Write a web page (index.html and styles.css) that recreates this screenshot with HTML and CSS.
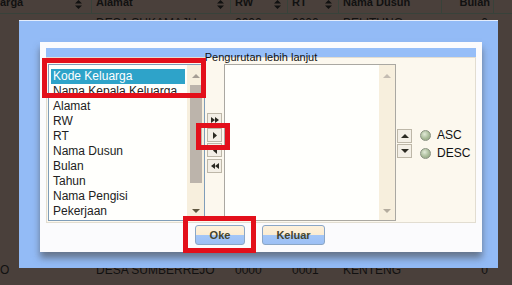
FILE: index.html
```html
<!DOCTYPE html>
<html lang="id">
<head>
    <meta charset="UTF-8">
    <meta name="viewport" content="width=device-width, initial-scale=1.0">
    <title>Pengurutan lebih lanjut</title>
    <link rel="stylesheet" href="styles.css">
</head>
<body>

    <div class="grid">
        <div class="thead">
            <div class="th c0"><span>arga</span><svg class="sort" width="7" height="9" viewBox="0 0 7 9"><path d="M3.5 0L7 3.5H0Z M0 5.5H7L3.5 9Z"/></svg></div>
            <div class="th c1"><span>Alamat</span><svg class="sort" width="7" height="9" viewBox="0 0 7 9"><path d="M3.5 0L7 3.5H0Z M0 5.5H7L3.5 9Z"/></svg></div>
            <div class="th c2"><span>RW</span><svg class="sort" width="7" height="9" viewBox="0 0 7 9"><path d="M3.5 0L7 3.5H0Z M0 5.5H7L3.5 9Z"/></svg></div>
            <div class="th c3"><span>RT</span><svg class="sort" width="7" height="9" viewBox="0 0 7 9"><path d="M3.5 0L7 3.5H0Z M0 5.5H7L3.5 9Z"/></svg></div>
            <div class="th c4"><span>Nama Dusun</span></div>
            <div class="th c5 right"><span>Bulan</span></div>
            <div class="th c6"></div>
        </div>

        <div class="tr"><div class="td c0"></div><div class="td c1">DESA SUKAMAJU</div><div class="td c2">0000</div><div class="td c3">0000</div><div class="td c4">BELITUNG</div><div class="td c5 right">0</div><div class="td c6"></div></div>
        <div class="tr"><div class="td c0"></div><div class="td c1">DESA SUKAMAJU</div><div class="td c2">0000</div><div class="td c3">0001</div><div class="td c4">BELITUNG</div><div class="td c5 right">0</div><div class="td c6"></div></div>
        <div class="tr"><div class="td c0"></div><div class="td c1">DESA SUKAMAJU</div><div class="td c2">0000</div><div class="td c3">0001</div><div class="td c4">BELITUNG</div><div class="td c5 right">0</div><div class="td c6"></div></div>
        <div class="tr"><div class="td c0"></div><div class="td c1">DESA SUKAMAJU</div><div class="td c2">0001</div><div class="td c3">0002</div><div class="td c4">KRAJAN</div><div class="td c5 right">0</div><div class="td c6"></div></div>
        <div class="tr"><div class="td c0"></div><div class="td c1">DESA SUKAMAJU</div><div class="td c2">0001</div><div class="td c3">0002</div><div class="td c4">KRAJAN</div><div class="td c5 right">0</div><div class="td c6"></div></div>
        <div class="tr"><div class="td c0"></div><div class="td c1">DESA SUKAMAJU</div><div class="td c2">0001</div><div class="td c3">0003</div><div class="td c4">KRAJAN</div><div class="td c5 right">0</div><div class="td c6"></div></div>
        <div class="tr"><div class="td c0"></div><div class="td c1">DESA SUKAMAJU</div><div class="td c2">0002</div><div class="td c3">0003</div><div class="td c4">SUMBERSARI</div><div class="td c5 right">0</div><div class="td c6"></div></div>
        <div class="tr"><div class="td c0"></div><div class="td c1">DESA SUKAMAJU</div><div class="td c2">0002</div><div class="td c3">0004</div><div class="td c4">SUMBERSARI</div><div class="td c5 right">0</div><div class="td c6"></div></div>
        <div class="tr"><div class="td c0"></div><div class="td c1">DESA SUKAMAJU</div><div class="td c2">0002</div><div class="td c3">0004</div><div class="td c4">SUMBERSARI</div><div class="td c5 right">0</div><div class="td c6"></div></div>
        <div class="tr"><div class="td c0"></div><div class="td c1">DESA SUMBERREJO</div><div class="td c2">0000</div><div class="td c3">0001</div><div class="td c4">KENTENG</div><div class="td c5 right">0</div><div class="td c6"></div></div>
        <div class="tr"><div class="td c0"></div><div class="td c1">DESA SUMBERREJO</div><div class="td c2">0000</div><div class="td c3">0001</div><div class="td c4">KENTENG</div><div class="td c5 right">0</div><div class="td c6"></div></div>
        <div class="tr"><div class="td c0"></div><div class="td c1">DESA SUMBERREJO</div><div class="td c2">0000</div><div class="td c3">0001</div><div class="td c4">KENTENG</div><div class="td c5 right">0</div><div class="td c6"></div></div>
        <div class="tr"><div class="td c0"></div><div class="td c1">DESA SUMBERREJO</div><div class="td c2">0000</div><div class="td c3">0001</div><div class="td c4">KENTENG</div><div class="td c5 right">0</div><div class="td c6"></div></div>
        <div class="tr"><div class="td c0">O</div><div class="td c1">DESA SUMBERREJO</div><div class="td c2">0000</div><div class="td c3">0001</div><div class="td c4">KENTENG</div><div class="td c5 right">0</div><div class="td c6"></div></div>
    </div>

    <!-- dialog sits over the table -->
    <div class="dialog">
        <div class="panel">
            <div class="caption">Pengurutan lebih lanjut</div>

            <div class="frame">
                <div class="listbox source">
                    <ul class="items">
                        <li class="selected">Kode Keluarga</li>
                        <li>Nama Kepala Keluarga</li>
                        <li>Alamat</li>
                        <li>RW</li>
                        <li>RT</li>
                        <li>Nama Dusun</li>
                        <li>Bulan</li>
                        <li>Tahun</li>
                        <li>Nama Pengisi</li>
                        <li>Pekerjaan</li>
                    </ul>
                    <div class="vscroll">
                        <span class="tri up"></span>
                        <span class="thumb"></span>
                        <span class="tri down"></span>
                    </div>
                </div>

                <div class="moves">
                    <button class="mini" aria-label="Pindah semua">
                        <svg width="8" height="6" viewBox="0 0 8 6"><path d="M0 0L4 3L0 6Z M4 0L8 3L4 6Z"/></svg>
                    </button>
                    <button class="mini" aria-label="Pindah">
                        <svg width="4" height="7" viewBox="0 0 4 7"><path d="M0 0L4 3.5L0 7Z"/></svg>
                    </button>
                    <button class="mini" aria-label="Kembalikan">
                        <svg width="4" height="7" viewBox="0 0 4 7"><path d="M4 0L0 3.5L4 7Z"/></svg>
                    </button>
                    <button class="mini last" aria-label="Kembalikan semua">
                        <svg width="8" height="6" viewBox="0 0 8 6"><path d="M4 0L0 3L4 6Z M8 0L4 3L8 6Z"/></svg>
                    </button>
                </div>

                <div class="listbox target">
                    <div class="items"></div>
                    <div class="vscroll light">
                        <span class="tri up"></span>
                        <span class="tri down"></span>
                    </div>
                </div>

                <div class="order">
                    <div class="updown">
                        <button class="mini" aria-label="Naik"><span class="tri up"></span></button>
                        <button class="mini" aria-label="Turun"><span class="tri down"></span></button>
                    </div>
                    <div class="radios">
                        <label class="radio-row"><span class="radio"></span>ASC</label>
                        <label class="radio-row"><span class="radio"></span>DESC</label>
                    </div>
                </div>
            </div>

            <div class="actions">
                <button class="btn oke">Oke</button>
                <button class="btn keluar">Keluar</button>
            </div>
        </div>
    </div>

    <!-- red annotation boxes -->
    <div class="mark mark-list"></div>
    <div class="mark mark-move"></div>
    <div class="mark mark-ok"></div>

</body>
</html>
```

FILE: styles.css
```css
body {
  margin: 0;
  width: 512px;
  height: 285px;
  overflow: hidden;
  background-color: #4a403b;
  font-family: "Liberation Sans", Arial, sans-serif;
  color: #111;
}

/* table behind the dialog */

.thead,
.tr {
  display: flex;
}

.thead {
  height: 13px;
  border-bottom: 1px solid #38423a;
}

.th,
.td {
  box-sizing: border-box;
  flex: none;
  border-right: 1px solid transparent;
  padding-left: 4px;
  padding-right: 6px;
  white-space: nowrap;
  overflow: hidden;
}

.th {
  display: flex;
  justify-content: space-between;
  height: 13px;
  line-height: 5px;
  font-size: 11px;
  font-weight: bold;
  border-right-color: #38423a;
}

.th.right {
  justify-content: flex-end;
  padding-right: 3px;
}

.sort {
  flex: none;
  fill: #111;
}

.tr {
  height: 19px;
}

.td {
  line-height: 18px;
  font-size: 12px;
  color: #111;
}

.td.right {
  text-align: right;
  padding-right: 5px;
}

.c0 { width: 92px; padding-left: 0; padding-right: 9px; }
.c1 { width: 139px; }
.c2 { width: 57px; }
.c3 { width: 51px; }
.c4 { width: 103px; }
.c5 { width: 52px; }
.c6 { flex: 1; border-right: 0; }

/* dialog */

.dialog {
  position: absolute;
  left: 19px;
  top: 20px;
  width: 479px;
  height: 248px;
  box-sizing: border-box;
  padding: 22px 16px 16px 21px;
  background-color: #93bbf6;
  box-shadow: inset 0 1px 0 #e4edfc;
}

.panel {
  width: 442px;
  height: 210px;
  box-sizing: border-box;
  padding: 6px;
  background-color: #fbfbfd;
  box-shadow: 0 6px 7px rgba(70, 70, 70, 0.6);
}

.caption {
  height: 9px;
  line-height: 19px;
  background-color: #96bef8;
  text-align: center;
  font-size: 11px;
  white-space: nowrap;
}

.frame {
  display: flex;
  align-items: flex-start;
  height: 166px;
  box-sizing: border-box;
  padding: 6px 0 0 1px;
  background-color: #fcf8ee;
  border: 1px solid #e2ddd1;
}

.listbox {
  display: flex;
  height: 157px;
  box-sizing: border-box;
  flex: none;
  background-color: #fffffc;
}

.listbox.source {
  width: 157px;
  border: 1px solid #7f9db9;
}

.listbox.target {
  width: 172px;
  border: 1px solid #aaa8a2;
}

.items {
  flex: 1;
  margin: 0;
  padding: 4px 0 0;
  list-style: none;
  overflow: hidden;
}

.items li {
  height: 15px;
  line-height: 15px;
  margin: 0 2px;
  padding-left: 2px;
  font-size: 12px;
  color: #222;
  white-space: nowrap;
}

.items li.selected {
  background-color: #2ea3c9;
  color: #fff;
}

.vscroll {
  display: flex;
  flex-direction: column;
  align-items: center;
  width: 17px;
  flex: none;
  background-color: #f7efdd;
}

.vscroll .tri.up {
  margin-top: 9px;
}

.vscroll .tri.down {
  margin-top: auto;
  margin-bottom: 7px;
}

.thumb {
  width: 12px;
  height: 98px;
  margin-top: 7px;
  background-color: #bcb4ab;
}

.tri {
  display: block;
  width: 0;
  height: 0;
  border-left: 4px solid transparent;
  border-right: 4px solid transparent;
}

.tri.up {
  border-bottom: 4px solid #a59d94;
}

.tri.down {
  border-top: 4px solid #5f5740;
}

.vscroll.light {
  width: 16px;
}

.vscroll.light .tri.up {
  border-bottom-color: #c4bcb2;
}

.vscroll.light .tri.down {
  border-top-color: #b4ac9e;
}

/* small square buttons */

.mini {
  display: flex;
  align-items: center;
  justify-content: center;
  width: 15px;
  height: 14px;
  margin: 0 0 1px;
  padding: 0;
  box-sizing: border-box;
  border: 1px solid #bdb7a8;
  background-color: #f3efe6;
  fill: #2b2a22;
}

.mini.last {
  margin-top: 1px;
}

.moves {
  display: flex;
  flex-direction: column;
  align-items: center;
  width: 19px;
  flex: none;
  padding-top: 49px;
}

.order {
  display: flex;
  align-items: flex-start;
  flex: 1;
  padding: 65px 0 0 1px;
}

.updown .mini .tri.up {
  border-bottom-color: #2b2a22;
}

.updown .mini .tri.down {
  border-top-color: #2b2a22;
}

.radios {
  margin: -3px 0 0 8px;
}

.radio-row {
  display: flex;
  align-items: center;
  gap: 6px;
  height: 18px;
  font-size: 12px;
  color: #111;
}

.radio {
  width: 11px;
  height: 11px;
  box-sizing: border-box;
  border-radius: 50%;
  border: 1px solid #8a9282;
  background: radial-gradient(circle at 40% 35%, #e2ead8 0, #a9bb99 55%, #8fa27f 100%);
}

/* bottom buttons */

.actions {
  display: flex;
  justify-content: center;
  gap: 17px;
  margin-top: 2px;
  padding-right: 2px;
}

.btn {
  height: 20px;
  padding: 0;
  border: 1px solid #8aa6c6;
  border-radius: 3px;
  background: linear-gradient(#fdf1dc 0, #fbecd2 48%, #a4c6f7 52%, #9cc0f5 100%);
  font-family: "Liberation Sans", Arial, sans-serif;
  font-size: 11px;
  font-weight: bold;
  color: #45452c;
}

.btn.oke {
  width: 50px;
}

.btn.keluar {
  width: 63px;
}

/* annotations drawn over the screenshot */

.mark {
  position: absolute;
  box-sizing: border-box;
  border: 5px solid #e3101b;
}

.mark-list {
  left: 42px;
  top: 58px;
  width: 164px;
  height: 40px;
}

.mark-move {
  left: 196px;
  top: 123px;
  width: 34px;
  height: 27px;
}

.mark-ok {
  left: 183px;
  top: 216px;
  width: 73px;
  height: 37px;
}
```
